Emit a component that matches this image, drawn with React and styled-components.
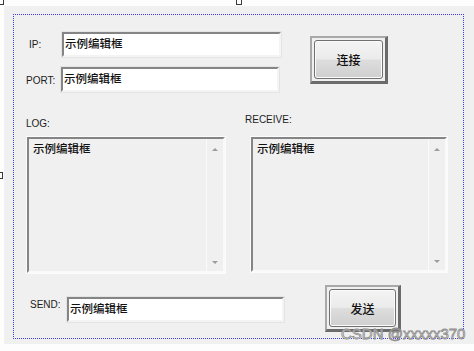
import React from 'react';
import styled, { createGlobalStyle } from 'styled-components';

const GlobalStyle = createGlobalStyle`
  body {
    margin: 0;
    background: #fdfdfd;
    font-family: "Liberation Sans", "Noto Sans CJK SC", sans-serif;
  }
`;

const CJK = '"Noto Sans CJK SC", "Liberation Sans", sans-serif';

const Screen = styled.div`
  position: relative;
  width: 474px;
  height: 351px;
  overflow: hidden;
  padding: 6px 0 0 4px;
  box-sizing: border-box;
`;

const Handle = styled.div`
  position: absolute;
  left: ${p => p.$x}px;
  top: ${p => p.$y}px;
  width: 4px;
  height: 5px;
  border: 1px solid #3a3a3a;
  background: #fff;
`;

const Dialog = styled.div`
  width: 470px;
  height: 338px;
  background: #f0f0f0;
  padding: 8px 0 0 9px;
  box-sizing: border-box;
`;

const Frame = styled.div`
  width: 451px;
  height: 325px;
  border: 1px dotted #3b3bea;
  box-sizing: border-box;
  display: flex;
  flex-direction: column;
`;

const TopSection = styled.div`
  display: flex;
  align-items: flex-start;
`;

const Fields = styled.div`
  display: flex;
  flex-direction: column;
  gap: 10px;
  padding-top: 17px;
`;

const FieldRow = styled.div`
  display: flex;
  align-items: flex-start;
  padding-left: ${p => p.$pad}px;
  margin-top: ${p => p.$top || 0}px;
`;

const FieldLabel = styled.div`
  width: ${p => p.$w}px;
  padding-top: ${p => p.$top}px;
  font-size: 10px;
  line-height: 12px;
  color: #1c1c1c;
`;

const Edit = styled.div`
  width: ${p => p.$w}px;
  height: 25px;
  box-sizing: border-box;
  border: 2px solid;
  border-color: #858585 #f4f4f4 #f4f4f4 #858585;
  box-shadow: 0 0 0 1px #e4e4e4;
  background: #fff;
  padding: 3px 1px 0;
  font-family: ${CJK};
  font-size: 11.5px;
  font-weight: 500;
  line-height: 13px;
  color: #111;
  white-space: nowrap;
`;

const ButtonFrame = styled.div`
  width: ${p => p.$w}px;
  height: ${p => p.$h}px;
  margin: ${p => p.$top}px 0 0 ${p => p.$left}px;
  box-sizing: border-box;
  border-style: solid;
  border-width: 2px 3px 3px 2px;
  border-color: #a9a9a9 #6b6b6b #6b6b6b #a9a9a9;
  padding: 2px;
  background: #f0f0f0;
`;

const ButtonFace = styled.div`
  height: 100%;
  box-sizing: border-box;
  border: 1px solid #707070;
  border-radius: 3px;
  box-shadow: inset 0 0 0 1px #fbfbfb;
  background: linear-gradient(#f4f4f4, #ebebeb 48%, #dddddd 52%, #cfcfcf);
  display: flex;
  align-items: center;
  justify-content: center;
  font-family: ${CJK};
  font-size: 12px;
  font-weight: 500;
  color: #111;
`;

const MidSection = styled.div`
  display: flex;
  gap: 20px;
  padding-left: 12px;
`;

const Panel = styled.div`
  width: ${p => p.$w}px;
  display: flex;
  flex-direction: column;
`;

const PanelLabel = styled.div`
  height: 44px;
  box-sizing: border-box;
  padding-top: ${p => p.$top}px;
  font-size: 10px;
  line-height: 12px;
  color: #1c1c1c;
`;

const TextBox = styled.div`
  width: ${p => p.$w}px;
  height: ${p => p.$h}px;
  margin: 1px 0 0 ${p => p.$left}px;
  box-sizing: border-box;
  border: 2px solid;
  border-color: #858585 #fafafa #fafafa #858585;
  box-shadow: 0 0 0 1px #fbfbfb;
  display: flex;
`;

const TextBody = styled.div`
  flex: 1;
  padding: 3px 4px;
  font-family: ${CJK};
  font-size: 11.5px;
  font-weight: 500;
  line-height: 13px;
  color: #111;
`;

const ScrollBar = styled.div`
  width: 17px;
  box-sizing: border-box;
  border-left: 1px solid #fafafa;
  display: flex;
  flex-direction: column;
  align-items: center;
  justify-content: space-between;
  padding: 9px 0 7px;
`;

const Arrow = styled.div`
  width: 0;
  height: 0;
  border-left: 3px solid transparent;
  border-right: 3px solid transparent;
  ${p => (p.$down ? 'border-top' : 'border-bottom')}: 3px solid #9c9c9c;
`;

const BottomSection = styled.div`
  display: flex;
  align-items: flex-start;
`;

const Watermark = styled.div`
  position: absolute;
  left: 341px;
  top: 326px;
  font-family: "Liberation Sans", sans-serif;
  font-size: 15px;
  line-height: 16px;
  color: #f4f4f4;
  -webkit-text-stroke: 0.8px #8a8a8a;
  white-space: nowrap;
`;

const LogBox = ({ w, h, left }) => (
  <TextBox $w={w} $h={h} $left={left}>
    <TextBody>示例编辑框</TextBody>
    <ScrollBar>
      <Arrow />
      <Arrow $down />
    </ScrollBar>
  </TextBox>
);

export default function App() {
  return (
    <>
      <GlobalStyle />
      <Screen>
        <Handle $x={-2} $y={-2} />
        <Handle $x={236} $y={-2} />
        <Handle $x={-3} $y={172} />
        <Dialog>
          <Frame>
            <TopSection>
              <Fields>
                <FieldRow $pad={15}>
                  <FieldLabel $w={33} $top={7}>IP:</FieldLabel>
                  <Edit $w={219}>示例编辑框</Edit>
                </FieldRow>
                <FieldRow $pad={12}>
                  <FieldLabel $w={35} $top={8}>PORT:</FieldLabel>
                  <Edit $w={218}>示例编辑框</Edit>
                </FieldRow>
              </Fields>
              <ButtonFrame $w={78} $h={48} $top={21} $left={29}>
                <ButtonFace>连接</ButtonFace>
              </ButtonFrame>
            </TopSection>

            <MidSection>
              <Panel $w={199}>
                <PanelLabel $top={26}>LOG:</PanelLabel>
                <LogBox w={198} h={136} left={1} />
              </Panel>
              <Panel $w={202}>
                <PanelLabel $top={22}>RECEIVE:</PanelLabel>
                <LogBox w={196} h={135} left={6} />
              </Panel>
            </MidSection>

            <BottomSection>
              <FieldRow $pad={16} $top={24}>
                <FieldLabel $w={37} $top={2}>SEND:</FieldLabel>
                <Edit $w={217}>示例编辑框</Edit>
              </FieldRow>
              <ButtonFrame $w={76} $h={47} $top={12} $left={41}>
                <ButtonFace>发送</ButtonFace>
              </ButtonFrame>
            </BottomSection>
          </Frame>
        </Dialog>
        <Watermark>CSDN @xxxxx370</Watermark>
      </Screen>
    </>
  );
}
